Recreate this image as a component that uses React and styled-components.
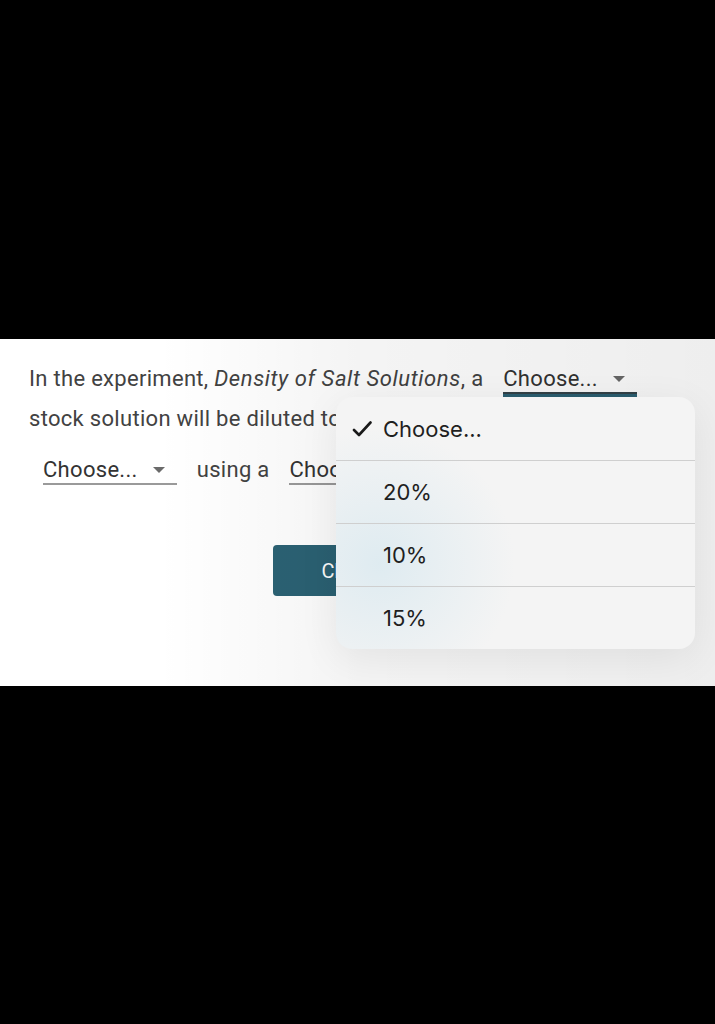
import React from 'react';
import styled, { createGlobalStyle } from 'styled-components';

const GlobalStyle = createGlobalStyle`
  html, body {
    margin: 0;
    padding: 0;
    background: #000;
  }
  body {
    min-height: 1024px;
  }
`;

const Page = styled.div`
  padding-top: 339px;
  min-height: 1024px;
  box-sizing: border-box;
  background: #000;
`;

const Band = styled.section`
  position: relative;
  height: 347px;
  box-sizing: border-box;
  padding: 20px 29px 0;
  background: #fff;
  overflow: hidden;
  font-family: Roboto, "Liberation Sans", sans-serif;
  font-size: 22px;
  letter-spacing: 0.3px;
  color: #424242;

  &::after {
    content: '';
    position: absolute;
    inset: 0;
    pointer-events: none;
    background: linear-gradient(90deg, rgba(0,0,0,0) 22%, rgba(0,0,0,0.045) 50%, rgba(0,0,0,0.065) 100%);
  }
`;

const Line = styled.div`
  height: 40px;
  line-height: 40px;
  white-space: nowrap;
  margin-top: ${(p) => p.$gap || 0}px;
`;

const Title = styled.em`
  letter-spacing: 0.6px;
`;

const Select = styled.span`
  display: inline-flex;
  align-items: baseline;
  justify-content: space-between;
  box-sizing: border-box;
  width: 134px;
  margin: 0 14px;
  padding: 0 12px 2px 0;
  line-height: 22px;
  color: #333;
  border-bottom: 2px solid ${(p) => (p.$focused ? '#34434a' : '#9a9a9a')};
  box-shadow: ${(p) => (p.$focused ? '0 3px 0 #2c6275' : 'none')};
`;

const Caret = styled.svg`
  width: 12px;
  height: 6px;
  align-self: center;
  fill: #6a6a6a;
`;

const ButtonRow = styled.div`
  display: flex;
  justify-content: center;
  margin-top: 55px;
`;

const CheckButton = styled.button`
  width: 170px;
  height: 51px;
  padding: 0 0 0 49px;
  text-align: left;
  border: none;
  border-radius: 4px;
  background: #2b6274;
  color: #fff;
  font-family: Roboto, "Liberation Sans", sans-serif;
  font-size: 20px;
`;

const Menu = styled.ul`
  position: absolute;
  left: 336px;
  top: 58px;
  width: 359px;
  margin: 0;
  padding: 0;
  list-style: none;
  border-radius: 16px;
  overflow: hidden;
  z-index: 2;
  background:
    radial-gradient(circle at 12% 66%, rgba(205, 228, 238, 0.55), rgba(205, 228, 238, 0) 38%),
    #f4f4f4;
  box-shadow: 0 10px 40px rgba(0, 0, 0, 0.07);
  font-family: Inter, Roboto, "Liberation Sans", sans-serif;
  font-size: 22px;
  letter-spacing: 0;
  color: #1f1f1f;
`;

const Option = styled.li`
  display: flex;
  align-items: center;
  height: 63px;
  box-sizing: border-box;
  padding-left: 16px;
  border-top: ${(p) => (p.$firstRow ? 'none' : '1px solid #cfcfcf')};
`;

const Mark = styled.span`
  display: flex;
  align-items: center;
  width: 31px;
  height: 20px;
`;

const Tick = () => (
  <svg width="20" height="16" viewBox="0 0 20 16">
    <path d="M2 9 L7 14 L18.5 1.5" fill="none" stroke="#1a1a1a" strokeWidth="2.6" strokeLinecap="round" strokeLinejoin="round" />
  </svg>
);

const Dropdown = ({ focused, label = 'Choose...' }) => (
  <Select $focused={focused}>
    <span>{label}</span>
    <Caret viewBox="0 0 12 6">
      <path d="M0 0 L12 0 L6 6 Z" />
    </Caret>
  </Select>
);

const options = ['Choose...', '20%', '10%', '15%'];

const App = () => (
  <>
    <GlobalStyle />
    <Page>
      <Band>
        <Line>
          In the experiment, <Title>Density of Salt Solutions</Title>, a <Dropdown focused />
        </Line>
        <Line>stock solution will be diluted to a</Line>
        <Line $gap={11}>
          <Dropdown /> using a <Dropdown />
        </Line>
        <ButtonRow>
          <CheckButton>Check</CheckButton>
        </ButtonRow>
        <Menu>
          {options.map((opt, i) => (
            <Option key={opt} $firstRow={i === 0}>
              <Mark>{i === 0 && <Tick />}</Mark>
              {opt}
            </Option>
          ))}
        </Menu>
      </Band>
    </Page>
  </>
);

export default App;
